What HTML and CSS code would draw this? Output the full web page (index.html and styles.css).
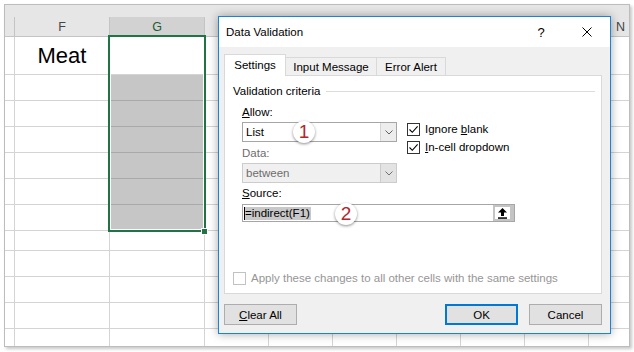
FILE: index.html
```html
<!DOCTYPE html>
<html>
<head>
<meta charset="utf-8">
<link rel="stylesheet" href="styles.css">
</head>
<body>
<div class="stage">
  <div class="sheet">
    <div class="topstrip"></div>
    <div class="row hdr"><span></span><span>F</span><span class="hsel">G</span><span></span><span></span><span></span><span></span><span></span><span></span><span>N</span></div>
    <div class="row r38"><span></span><span class="meat">Meat</span><span></span><span></span><span></span><span></span><span></span><span></span><span></span><span></span></div>
    <div class="row r26"><span></span><span></span><span class="gs"></span><span></span><span></span><span></span><span></span><span></span><span></span><span></span></div>
    <div class="row r26"><span></span><span></span><span class="gs"></span><span></span><span></span><span></span><span></span><span></span><span></span><span></span></div>
    <div class="row r26"><span></span><span></span><span class="gs"></span><span></span><span></span><span></span><span></span><span></span><span></span><span></span></div>
    <div class="row r26"><span></span><span></span><span class="gs"></span><span></span><span></span><span></span><span></span><span></span><span></span><span></span></div>
    <div class="row r26"><span></span><span></span><span class="gs"></span><span></span><span></span><span></span><span></span><span></span><span></span><span></span></div>
    <div class="row r26"><span></span><span></span><span class="gs"></span><span></span><span></span><span></span><span></span><span></span><span></span><span></span></div>
    <div class="row r20"><span></span><span></span><span></span><span></span><span></span><span></span><span></span><span></span><span></span><span></span></div>
    <div class="row r26"><span></span><span></span><span></span><span></span><span></span><span></span><span></span><span></span><span></span><span></span></div>
    <div class="row r26"><span></span><span></span><span></span><span></span><span></span><span></span><span></span><span></span><span></span><span></span></div>
    <div class="row r26"><span></span><span></span><span></span><span></span><span></span><span></span><span></span><span></span><span></span><span></span></div>
    <div class="row r26"><span></span><span></span><span></span><span></span><span></span><span></span><span></span><span></span><span></span><span></span></div>
    <div class="selection"></div>
    <div class="handle"></div>
  </div>

  <div class="dialog">
    <div class="titlebar">
      <span class="title">Data Validation</span>
      <span class="cap help">?</span>
      <span class="cap"><svg width="10" height="10" viewBox="0 0 10 10"><path d="M0.5 0.5 L9.5 9.5 M9.5 0.5 L0.5 9.5" stroke="#000" stroke-width="1" fill="none"/></svg></span>
    </div>
    <div class="dbody">
      <div class="tabs">
        <div class="tab active">Settings</div>
        <div class="tab t2">Input Message</div>
        <div class="tab t3">Error Alert</div>
      </div>
      <div class="panel">
        <div class="legend"><span>Validation criteria</span><span class="rule"></span></div>
        <div class="criteria">
          <div class="upper">
            <div class="leftcol">
              <div class="lbl"><u>A</u>llow:</div>
              <div class="combo">
                <span class="val">List</span>
                <span class="dd"><svg width="8" height="5" viewBox="0 0 8 5"><path d="M0.5 0.5 L4 4 L7.5 0.5" stroke="#606060" fill="none"/></svg></span>
                <span class="badge b1">1</span>
              </div>
              <div class="lbl dim">Data:</div>
              <div class="combo off">
                <span class="val">between</span>
                <span class="dd"><svg width="8" height="5" viewBox="0 0 8 5"><path d="M0.5 0.5 L4 4 L7.5 0.5" stroke="#707070" fill="none"/></svg></span>
              </div>
            </div>
            <div class="checks">
              <div class="chk"><span class="box"><svg width="11" height="11" viewBox="0 0 11 11"><path d="M1.5 5.5 L4.3 8.3 L9.6 2.3" stroke="#000" stroke-width="1.1" fill="none"/></svg></span><span>Ignore <u>b</u>lank</span></div>
              <div class="chk"><span class="box"><svg width="11" height="11" viewBox="0 0 11 11"><path d="M1.5 5.5 L4.3 8.3 L9.6 2.3" stroke="#000" stroke-width="1.1" fill="none"/></svg></span><span><u>I</u>n-cell dropdown</span></div>
            </div>
          </div>
          <div class="lbl src-lbl"><u>S</u>ource:</div>
          <div class="source">
            <span class="seltext">=indirect(F1)</span>
            <span class="badge b2">2</span>
            <span class="srcbtn"><svg width="9" height="11" viewBox="0 0 9 11"><path d="M4.5 0 L9 4.5 L6 4.5 L6 8 L3 8 L3 4.5 L0 4.5 Z" fill="#000"/><rect x="0" y="9.3" width="9" height="1.5" fill="#000"/></svg></span>
          </div>
        </div>
        <div class="apply"><span class="box dis"></span><span>Apply these changes to all other cells with the same settings</span></div>
      </div>
      <div class="actions">
        <button class="btn"><u>C</u>lear All</button>
        <button class="btn ok">OK</button>
        <button class="btn cancel">Cancel</button>
      </div>
    </div>
  </div>
</div>
</body>
</html>
```

FILE: styles.css
```css
body {
  margin: 0;
  background: #ffffff;
  font-family: "Liberation Sans", Arial, sans-serif;
}

.stage {
  position: relative;
  width: 634px;
  height: 352px;
  overflow: hidden;
}

/* spreadsheet */
.sheet {
  position: relative;
  margin: 4px 0 0 4px;
  width: 626px;
  height: 343px;
  box-sizing: border-box;
  border: 1px solid #bdbdbd;
  background: #ffffff;
  overflow: hidden;
  box-shadow: 2px 2px 3px rgba(0, 0, 0, 0.22);
}

.topstrip {
  height: 12px;
  background: #e6e6e6;
}

.row {
  display: flex;
}

.row > span {
  flex: none;
  box-sizing: border-box;
  width: 64px;
  height: 100%;
  border-right: 1px solid #d4d4d4;
  border-bottom: 1px solid #d4d4d4;
}

.row > span:nth-child(1) { width: 10px; }
.row > span:nth-child(2),
.row > span:nth-child(3) { width: 95px; }

.hdr { height: 20px; background: #e6e6e6; }
.hdr > span {
  border-color: #c4c4c4;
  display: flex;
  align-items: center;
  justify-content: center;
  font-size: 12.5px;
  color: #444444;
}
.hdr > span.hsel {
  background: #d2d2d2;
  color: #1e5a37;
}

.r38 { height: 38px; }
.r26 { height: 26px; }
.r20 { height: 20px; }

.meat {
  display: flex;
  align-items: center;
  justify-content: center;
  font-size: 22px;
  color: #000000;
}

.row > span.gs {
  background: #c6c6c6;
  border-bottom-color: #a9a9a9;
}

.selection {
  position: absolute;
  left: 103px;
  top: 30px;
  width: 98px;
  height: 197px;
  box-sizing: border-box;
  border: 2px solid #217346;
  box-shadow: inset 0 0 0 1px #ffffff;
}

.handle {
  position: absolute;
  left: 196px;
  top: 223px;
  width: 5px;
  height: 5px;
  background: #217346;
  border: 1px solid #ffffff;
}

/* dialog */
.dialog {
  position: absolute;
  left: 218px;
  top: 16px;
  width: 393px;
  height: 318px;
  box-sizing: border-box;
  border: 1px solid #1883d7;
  background: #f0f0f0;
  display: flex;
  flex-direction: column;
  box-shadow: 0 0 9px rgba(0, 0, 0, 0.35);
  font-size: 11.5px;
  color: #000000;
}

.titlebar {
  height: 30px;
  background: #ffffff;
  display: flex;
  align-items: center;
  flex: none;
}

.title {
  padding-left: 7px;
  font-size: 11.5px;
}

.cap {
  width: 46px;
  height: 30px;
  display: flex;
  align-items: center;
  justify-content: center;
}

.cap.help {
  margin-left: auto;
  font-size: 13px;
}

.dbody {
  flex: 1;
  display: flex;
  flex-direction: column;
  padding: 7px 8px 8px 5px;
}

.tabs {
  display: flex;
  align-items: flex-end;
  height: 21px;
  flex: none;
}

.tab {
  box-sizing: border-box;
  height: 18px;
  display: flex;
  align-items: center;
  justify-content: center;
  border-top: 1px solid #d9d9d9;
  border-right: 1px solid #d9d9d9;
  background: #f0f0f0;
}

.tab.active {
  width: 62px;
  height: 22px;
  margin-bottom: -1px;
  border-left: 1px solid #d9d9d9;
  background: #ffffff;
  position: relative;
  z-index: 1;
  padding-bottom: 2px;
}

.tab.t2 { width: 91px; }
.tab.t3 { width: 69px; }

.panel {
  height: 219px;
  box-sizing: border-box;
  border: 1px solid #d9d9d9;
  background: #ffffff;
  display: flex;
  flex-direction: column;
  padding: 7px 6px 7px 8px;
  flex: none;
}

.legend {
  display: flex;
  align-items: center;
  height: 16px;
}

.rule {
  flex: 1;
  height: 1px;
  background: #dcdcdc;
  margin-left: 6px;
}

.criteria {
  padding-left: 9px;
  margin-top: 5px;
}

.upper {
  display: flex;
}

.leftcol {
  width: 155px;
}

.lbl {
  height: 16px;
  line-height: 16px;
}

.lbl.dim { color: #6d6d6d; margin-top: 3px; }

.combo {
  position: relative;
  box-sizing: border-box;
  height: 20px;
  margin-top: 2px;
  border: 1px solid #a6a6a6;
  background: #ffffff;
  display: flex;
  align-items: center;
}

.combo .val {
  flex: 1;
  padding-left: 3px;
}

.combo .dd {
  width: 16px;
  height: 100%;
  box-sizing: border-box;
  border-left: 1px solid #d6d6d6;
  background: #ededed;
  display: flex;
  align-items: center;
  justify-content: center;
}

.combo.off {
  background: #f0f0f0;
  border-color: #cccccc;
  color: #6d6d6d;
}

.combo.off .dd {
  background: #e3e3e3;
  border-left-color: #cccccc;
}

.checks {
  margin-left: 10px;
  padding-top: 16px;
}

.chk {
  display: flex;
  align-items: center;
  height: 18px;
}

.box {
  width: 13px;
  height: 13px;
  box-sizing: border-box;
  border: 1px solid #333333;
  background: #ffffff;
  display: flex;
  align-items: center;
  justify-content: center;
  margin-right: 5px;
  flex: none;
}

.box.dis { border-color: #c2c2c2; }

.src-lbl { margin-top: 2px; }

.source {
  position: relative;
  box-sizing: border-box;
  width: 273px;
  height: 18px;
  margin-top: 3px;
  border: 1px solid #a6a6a6;
  background: #ffffff;
  display: flex;
  align-items: center;
}

.seltext {
  margin-left: 1px;
  background: #c8c8c8;
  line-height: 13px;
  padding-right: 1px;
  border-left: 1px solid #000000;
}

.srcbtn {
  margin-left: auto;
  width: 21px;
  height: 100%;
  box-sizing: border-box;
  border: 2px solid #c4c4c4;
  border-right-width: 4px;
  display: flex;
  align-items: center;
  justify-content: center;
}

.badge {
  position: absolute;
  top: -2px;
  width: 22px;
  height: 22px;
  border-radius: 50%;
  background: #ffffff;
  box-shadow: 0 1px 3px rgba(0, 0, 0, 0.45);
  color: #b3262c;
  font-size: 19px;
  display: flex;
  align-items: center;
  justify-content: center;
}

.badge.b1 { left: 50px; }
.badge.b2 { left: 92px; }

.apply {
  margin-top: auto;
  display: flex;
  align-items: center;
  height: 16px;
  color: #969696;
}

.actions {
  display: flex;
  margin-top: 10px;
  height: 21px;
}

.btn {
  width: 73px;
  height: 21px;
  box-sizing: border-box;
  border: 1px solid #adadad;
  background: #e1e1e1;
  font-family: "Liberation Sans", Arial, sans-serif;
  font-size: 11.5px;
  color: #000000;
  padding: 0;
}

.btn.ok {
  margin-left: auto;
  border: 2px solid #0078d7;
}

.btn.cancel { margin-left: 11px; }
```
